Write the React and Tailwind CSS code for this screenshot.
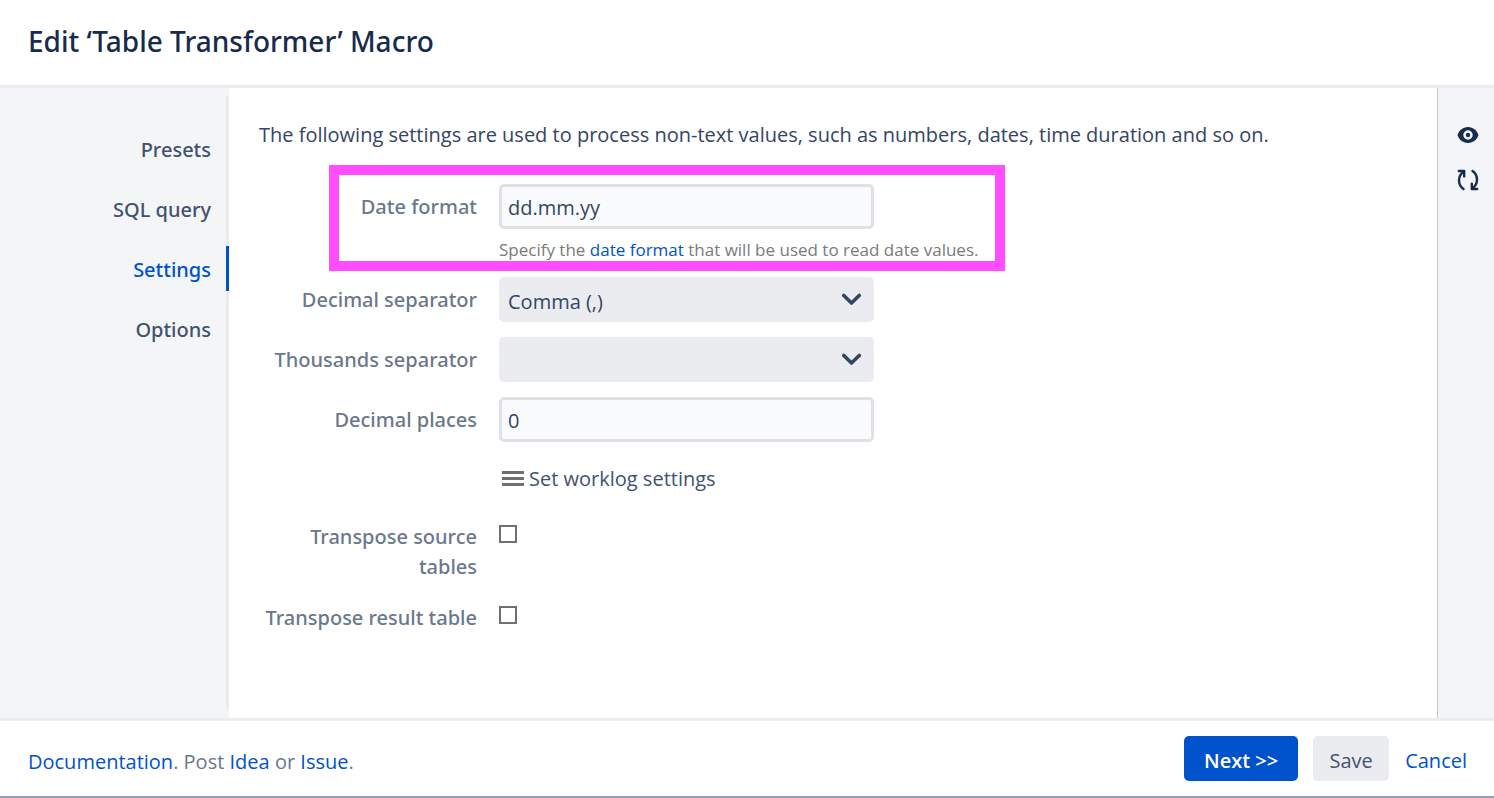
import { useState } from "react";

const NAV_ITEMS = ["Presets", "SQL query", "Settings", "Options"];

function EyeIcon() {
  return (
    <svg width="22" height="18" viewBox="0 0 22 18" aria-hidden="true">
      <path
        fillRule="evenodd"
        fill="#172b4d"
        d="M11 1C5.600 1 1.800 4.800.5 9c1.300 4.200 5.100 8 10.500 8s9.200-3.800 10.500-8C20.200 4.800 16.400 1 11 1Zm0 3.300a4.700 4.700 0 1 1 0 9.400 4.700 4.700 0 0 1 0-9.400Z"
      />
      <circle cx="11" cy="9" r="2.200" fill="#172b4d" />
    </svg>
  );
}

function RefreshIcon() {
  return (
    <svg
      width="22"
      height="22"
      viewBox="0 0 22 22"
      fill="none"
      stroke="#172b4d"
      strokeWidth="2.400"
      strokeLinecap="round"
      strokeLinejoin="round"
      aria-hidden="true"
    >
      <path d="M6.500 20C3.500 18 2 14.800 2 11.300 2 7.500 4 4.500 7 2.500M1.800 2h5.400v5.400" />
      <path d="M15.500 2C18.500 4 20 7.200 20 10.700c0 3.800-2 6.800-5 8.800M20.200 20h-5.400v-5.400" />
    </svg>
  );
}

function ChevronIcon() {
  return (
    <svg
      className="pointer-events-none absolute top-4 right-3"
      width="21"
      height="13"
      viewBox="0 0 21 13"
      fill="none"
      stroke="#344563"
      strokeWidth="3.600"
      strokeLinecap="round"
      strokeLinejoin="round"
      aria-hidden="true"
    >
      <path d="M2.800 2.500l7.700 7.500 7.700-7.500" />
    </svg>
  );
}

function MenuIcon() {
  return (
    <svg width="22" height="16" viewBox="0 0 22 16" fill="#707070" aria-hidden="true">
      <rect width="22" height="3" y="0" />
      <rect width="22" height="3" y="6" />
      <rect width="22" height="3" y="12" />
    </svg>
  );
}

function Row({ id, label, children }) {
  return (
    <div className="flex gap-[22px]">
      <label
        htmlFor={id}
        className="w-[218px] shrink-0 pt-2 text-right font-['Noto_Sans',sans-serif] font-medium leading-[30px] text-[#6b778c]"
      >
        {label}
      </label>
      <div className="min-w-0 flex-1">{children}</div>
    </div>
  );
}

function TextField({ id, value, onChange }) {
  return (
    <input
      id={id}
      type="text"
      value={value}
      onChange={(e) => onChange(e.target.value)}
      className="block h-[45px] w-full max-w-[375px] rounded-[5px] border-3 border-[#dfe1e6] bg-[#fafbfc] px-1.5 pt-0.5 text-[#344563] outline-none"
    />
  );
}

function SelectField({ id, value, onChange, options }) {
  return (
    <div className="relative max-w-[375px]">
      <select
        id={id}
        value={value}
        onChange={(e) => onChange(e.target.value)}
        className="block h-[45px] w-full appearance-none rounded-[5px] bg-[#ebecf0] px-[9px] pt-1 text-[#344563] outline-none"
      >
        {options.map((option) => (
          <option key={option} value={option}>
            {option}
          </option>
        ))}
      </select>
      <ChevronIcon />
    </div>
  );
}

function CheckRow({ id, label, checked, onChange }) {
  return (
    <div className="flex items-start gap-[22px]">
      <label
        htmlFor={id}
        className="w-[218px] shrink-0 pt-1.5 text-right font-['Noto_Sans',sans-serif] font-medium leading-[30px] text-[#6b778c]"
      >
        {label}
      </label>
      <input
        id={id}
        type="checkbox"
        checked={checked}
        onChange={(e) => onChange(e.target.checked)}
        className="mt-[9px] block size-[18px] appearance-none border-2 border-[#707070] bg-white checked:bg-[#0052cc]"
      />
    </div>
  );
}

export default function App() {
  const [tab, setTab] = useState("Settings");
  const [dateFormat, setDateFormat] = useState("dd.mm.yy");
  const [decimalSep, setDecimalSep] = useState("Comma (,)");
  const [thousandsSep, setThousandsSep] = useState("");
  const [places, setPlaces] = useState("0");
  const [transposeSource, setTransposeSource] = useState(false);
  const [transposeResult, setTransposeResult] = useState(false);

  return (
    <div className="flex min-h-screen flex-col border-b-2 border-[#97a0af] bg-white font-['Open_Sans','Noto_Sans',sans-serif] text-[20px] text-[#344563]">
      <header className="border-b-3 border-[#ebecf0] px-7 pt-[21px] pb-6">
        <h1 className="font-['Noto_Sans',sans-serif] text-[28px] leading-10 font-medium text-[#172b4d]">
          Edit ‘Table Transformer’ Macro
        </h1>
      </header>

      <div className="flex flex-1">
        {/* Tabs */}
        <div className="flex w-[229px] shrink-0 bg-[#f4f5f7] pt-2 pb-[7px]">
          <nav className="flex flex-1 flex-col gap-[15px] border-r-3 border-[#ebecf0] pt-[30px] font-['Noto_Sans',sans-serif]">
            {NAV_ITEMS.map((item) => (
              <button
                key={item}
                type="button"
                onClick={() => setTab(item)}
                className={
                  item === tab
                    ? "-mr-[3px] h-[45px] border-r-3 border-[#0052cc] pt-0.5 pr-[15px] text-right font-medium text-[#0052cc]"
                    : "-mr-[3px] h-[45px] border-r-3 border-transparent pt-0.5 pr-[15px] text-right font-medium text-[#42526e]"
                }
              >
                {item}
              </button>
            ))}
          </nav>
        </div>

        {/* Settings form */}
        <main className="min-w-0 flex-1 px-[30px] pt-8">
          <p className="leading-[30px] text-[#344563]">
            The following settings are used to process non-text values, such as
            numbers, dates, time duration and so on.
          </p>

          <form className="mt-[34px] flex flex-col gap-[15px]">
            <div className="relative">
              <Row id="date-format" label="Date format">
                <TextField id="date-format" value={dateFormat} onChange={setDateFormat} />
                <p className="mt-[11px] mb-0.5 text-[17px] leading-5 text-[#7a7a7a]">
                  Specify the{" "}
                  <a href="#date-format" className="text-[#0052cc]">
                    date format
                  </a>{" "}
                  that will be used to read date values.
                </p>
              </Row>
              {/* Highlight frame around the date format row */}
              <div className="pointer-events-none absolute -top-[19px] left-[70px] h-[106px] w-[676px] border-10 border-[#ff4dff]" />
            </div>

            <Row id="decimal-separator" label="Decimal separator">
              <SelectField
                id="decimal-separator"
                value={decimalSep}
                onChange={setDecimalSep}
                options={["Comma (,)", "Dot (.)"]}
              />
            </Row>

            <Row id="thousands-separator" label="Thousands separator">
              <SelectField
                id="thousands-separator"
                value={thousandsSep}
                onChange={setThousandsSep}
                options={["", "Space", "Comma (,)", "Dot (.)"]}
              />
            </Row>

            <Row id="decimal-places" label="Decimal places">
              <TextField id="decimal-places" value={places} onChange={setPlaces} />
            </Row>

            <button
              type="button"
              className="ml-[243px] flex h-11 items-center gap-[5px] self-start text-[#42526e]"
            >
              <MenuIcon />
              Set worklog settings
            </button>

            <CheckRow
              id="transpose-source"
              label="Transpose source tables"
              checked={transposeSource}
              onChange={setTransposeSource}
            />
            <CheckRow
              id="transpose-result"
              label="Transpose result table"
              checked={transposeResult}
              onChange={setTransposeResult}
            />
          </form>
        </main>

        {/* Preview tools */}
        <aside className="flex w-[57px] shrink-0 flex-col items-center gap-[25px] border-l border-[#c1c7d0] bg-[#f4f5f7] pt-[38px] pl-1">
          <button type="button" aria-label="Show preview">
            <EyeIcon />
          </button>
          <button type="button" aria-label="Refresh preview">
            <RefreshIcon />
          </button>
        </aside>
      </div>

      <footer className="flex items-center justify-between border-t-3 border-[#ebecf0] py-[15px] pr-[27px] pl-7">
        <p className="pt-1.5 text-[#6b778c]">
          <a href="#documentation" className="text-[#0052cc]">
            Documentation
          </a>
          . Post{" "}
          <a href="#idea" className="text-[#0052cc]">
            Idea
          </a>{" "}
          or{" "}
          <a href="#issue" className="text-[#0052cc]">
            Issue
          </a>
          .
        </p>
        <div className="flex items-center">
          <button
            type="button"
            className="h-[45px] w-[114px] rounded-[5px] bg-[#0052cc] pt-1 font-semibold text-white"
          >
            Next &gt;&gt;
          </button>
          <button
            type="button"
            className="ml-[15px] h-[45px] w-[76px] rounded-[5px] bg-[#ebecf0] pt-1 text-[#42526e]"
          >
            Save
          </button>
          <button type="button" className="ml-4 pt-1 text-[#0052cc]">
            Cancel
          </button>
        </div>
      </footer>
    </div>
  );
}
